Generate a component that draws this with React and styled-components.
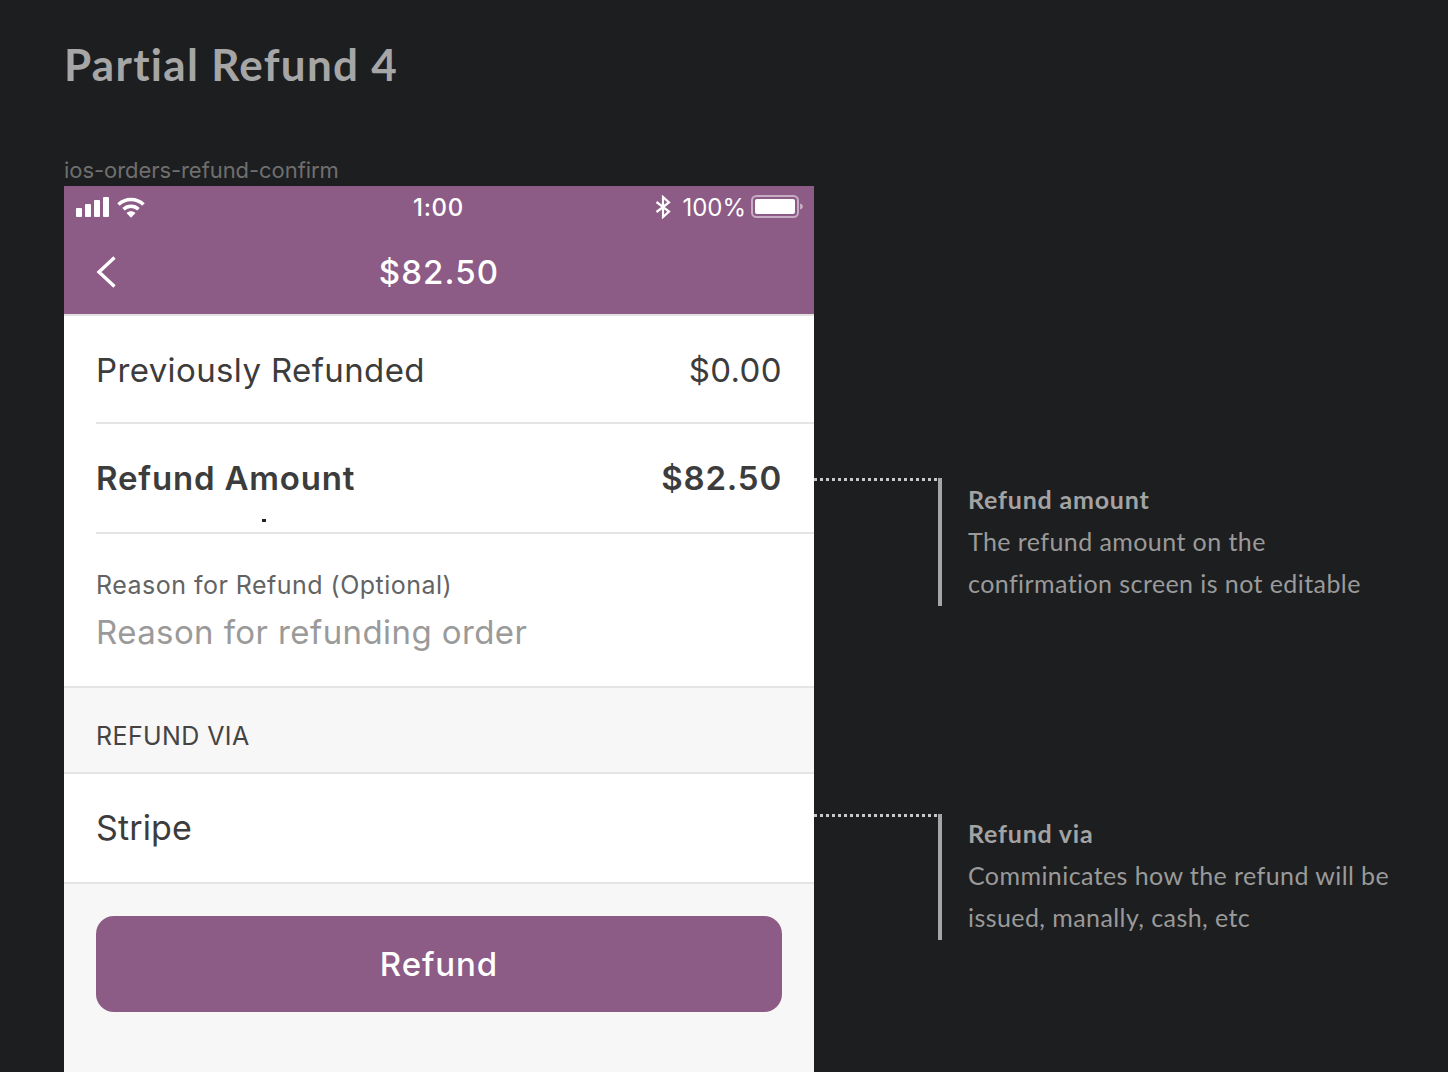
import React from "react";
import styled, { createGlobalStyle } from "styled-components";

const Global = createGlobalStyle`
  html, body { margin: 0; padding: 0; background: #1d1e20; }
  #root { height: 1072px; overflow: hidden; }
`;

const Page = styled.div`
  height: 1072px;
  overflow: hidden;
  background: #1d1e20;
  padding: 0 0 0 64px;
  box-sizing: border-box;
`;
const Title = styled.h1`
  margin: 0;
  padding-top: 39px;
  height: 157px;
  box-sizing: border-box;
  font: 700 44px/50px Lato, sans-serif;
  font-variant-ligatures: none;
  letter-spacing: 1.3px;
  color: #a6a6a6;
`;
const ArtLabel = styled.div`
  height: 29px;
  font: 400 22px/27px Inter, sans-serif;
  color: #6f6f6f;
  letter-spacing: -0.06px;
`;
const Board = styled.div`
  display: flex;
  align-items: flex-start;
`;
const Phone = styled.div`
  width: 750px;
  flex: none;
  background: #f7f7f7;
  height: 886px;
  font-family: Inter, sans-serif;
`;
const Bar = styled.div`
  background: #8c5b86;
  height: 128px;
  border-bottom: 2px solid #e2e2e2;
  color: #fff;
`;
const Status = styled.div`
  height: 42px;
  display: grid;
  grid-template-columns: 1fr auto 1fr;
  align-items: center;
  padding: 0 11px 0 12px;
`;
const StatusLeft = styled.div`
  display: flex;
  align-items: center;
  gap: 7px;
`;
const StatusRight = styled.div`
  display: flex;
  align-items: center;
  justify-content: flex-end;
  gap: 5px;
`;
const StatusText = styled.span`
  font-size: 24px;
  line-height: 42px;
  position: relative;
  top: 1px;
  letter-spacing: 0;
`;
const Clock = styled(StatusText)`
  font-weight: 500;
  letter-spacing: 0.7px;
  left: -1px;
`;
const Bluetooth = styled.svg`
  margin-right: 6px;
`;
const Nav = styled.div`
  height: 86px;
  box-sizing: border-box;
  padding-top: 2px;
  position: relative;
  display: flex;
  align-items: center;
  justify-content: center;
  font-size: 33px;
  font-weight: 500;
  letter-spacing: 1.1px;
`;
const Back = styled.svg`
  position: absolute;
  left: 32px;
  top: 28px;
`;
const White = styled.div`
  background: #fff;
`;
const Row = styled.div`
  display: flex;
  justify-content: space-between;
  align-items: center;
  height: ${(p) => p.$h}px;
  padding: ${(p) => (p.$bold ? 0 : 2)}px 32px 0 0;
  margin-left: 32px;
  box-sizing: border-box;
  border-bottom: 2px solid #e4e4e4;
  color: #3c3c3c;
  font-size: 33px;
  font-weight: ${(p) => (p.$bold ? 600 : 400)};
  letter-spacing: ${(p) => (p.$bold ? 0.82 : 0.38)}px;
  position: relative;
`;
const Speck = styled.i`
  position: absolute;
  left: 166px;
  top: 95px;
  width: 4px;
  height: 3px;
  background: #222;
`;
const Reason = styled.div`
  height: 154px;
  box-sizing: border-box;
  padding: 34px 32px 0;
  border-bottom: 2px solid #e4e4e4;
`;
const ReasonLabel = styled.div`
  font-size: 25px;
  line-height: 34px;
  color: #636363;
  letter-spacing: 0.48px;
`;
const ReasonInput = styled.div`
  font-size: 33px;
  line-height: 60px;
  color: #9a9a9a;
  letter-spacing: 0.41px;
`;
const SectionHead = styled.div`
  height: 86px;
  box-sizing: border-box;
  padding: 30px 32px 0;
  border-bottom: 2px solid #e4e4e4;
  font-size: 25px;
  line-height: 36px;
  color: #444;
  letter-spacing: 0.4px;
`;
const Method = styled.div`
  height: 110px;
  box-sizing: border-box;
  padding: 0 32px 2px;
  display: flex;
  align-items: center;
  border-bottom: 2px solid #e4e4e4;
  font-size: 34px;
  letter-spacing: 0.15px;
  color: #3c3c3c;
  background: #fff;
`;
const Action = styled.div`
  padding: 32px;
`;
const RefundButton = styled.button`
  width: 100%;
  height: 96px;
  display: block;
  border: 0;
  border-radius: 18px;
  background: #8c5b86;
  color: #fff;
  font: 500 33px Inter, sans-serif;
  letter-spacing: 0.9px;
`;
const Notes = styled.div`
  flex: 1;
  padding-top: 292px;
`;
const Note = styled.div`
  display: flex;
  margin-bottom: ${(p) => p.$gap}px;
  font-family: Lato, sans-serif;
  font-variant-ligatures: none;
`;
const Leader = styled.div`
  width: 124px;
  height: 3px;
  flex: none;
  background: repeating-linear-gradient(to right, #c8c8c8 0 3px, transparent 3px 6px);
`;
const NoteBody = styled.div`
  border-left: 4px solid #a6a6a6;
  padding-left: 26px;
  height: ${(p) => p.$h}px;
  box-sizing: border-box;
  color: #9a9a9a;
  font-size: 25px;
  line-height: 42px;
  letter-spacing: 0.42px;
  white-space: nowrap;
`;
const NoteTitle = styled.div`
  font-weight: 700;
  letter-spacing: 0.8px;
  color: #a3a3a3;
`;
const NoteTitleVia = styled(NoteTitle)`
  margin-top: -2px;
`;

export default function App() {
  return (
    <Page>
      <Global />
      <Title>Partial Refund 4</Title>
      <ArtLabel>ios-orders-refund-confirm</ArtLabel>
      <Board>
        <Phone>
          <Bar>
            <Status>
              <StatusLeft>
                <svg width="34" height="20" viewBox="0 0 34 20" fill="#fff">
                  <rect x="0" y="11" width="6" height="9" rx="1" />
                  <rect x="9" y="7" width="6" height="13" rx="1" />
                  <rect x="18" y="3" width="6" height="17" rx="1" />
                  <rect x="27" y="0" width="6" height="20" rx="1" />
                </svg>
                <svg width="28" height="21" viewBox="0 0 28 21" fill="none" stroke="#fff" strokeWidth="3.6">
                  <path d="M1.500 7.500C8.500 .8 19.500 .8 26.500 7.500" />
                  <path d="M6.500 12.200C10.800 8.200 17.200 8.200 21.500 12.200" />
                  <path d="M9.500 16 14 20.800 18.500 16C15.800 13.500 12.200 13.500 9.500 16Z" fill="#fff" stroke="none" />
                </svg>
              </StatusLeft>
              <Clock>1:00</Clock>
              <StatusRight>
                <Bluetooth width="16" height="24" viewBox="0 0 16 24" fill="none" stroke="#fff" strokeWidth="2.2">
                  <path d="M1.500 7 14 16.500 8 22V2l6 5.500L1.500 17" />
                </Bluetooth>
                <StatusText>100%</StatusText>
                <svg width="52" height="24" viewBox="0 0 52 24">
                  <rect x="1" y="1" width="46" height="21" rx="4.500" fill="none" stroke="#fff" strokeOpacity="0.5" strokeWidth="2" />
                  <rect x="4" y="4" width="40" height="15" rx="2" fill="#fff" />
                  <path d="M49 8.500c2 .5 3 2 3 3s-1 2.500-3 3z" fill="#fff" fillOpacity="0.5" />
                </svg>
              </StatusRight>
            </Status>
            <Nav>
              <Back width="20" height="32" viewBox="0 0 20 32" fill="none" stroke="#fff" strokeWidth="3.4">
                <path d="M18.500 1.500 3 16l15.500 14.500" />
              </Back>
              $82.50
            </Nav>
          </Bar>
          <White>
            <Row $h={108}>
              <span>Previously Refunded</span>
              <span>$0.00</span>
            </Row>
            <Row $h={110} $bold>
              <span>Refund Amount</span>
              <span>$82.50</span>
              <Speck />
            </Row>
            <Reason>
              <ReasonLabel>Reason for Refund (Optional)</ReasonLabel>
              <ReasonInput>Reason for refunding order</ReasonInput>
            </Reason>
          </White>
          <SectionHead>REFUND VIA</SectionHead>
          <Method>Stripe</Method>
          <Action>
            <RefundButton>Refund</RefundButton>
          </Action>
        </Phone>
        <Notes>
          <Note $gap={208}>
            <Leader />
            <NoteBody $h={128}>
              <NoteTitle>Refund amount</NoteTitle>
              The refund amount on the
              <br />
              confirmation screen is not editable
            </NoteBody>
          </Note>
          <Note $gap={0}>
            <Leader />
            <NoteBody $h={126}>
              <NoteTitleVia>Refund via</NoteTitleVia>
              Comminicates how the refund will be
              <br />
              issued, manally, cash, etc
            </NoteBody>
          </Note>
        </Notes>
      </Board>
    </Page>
  );
}
